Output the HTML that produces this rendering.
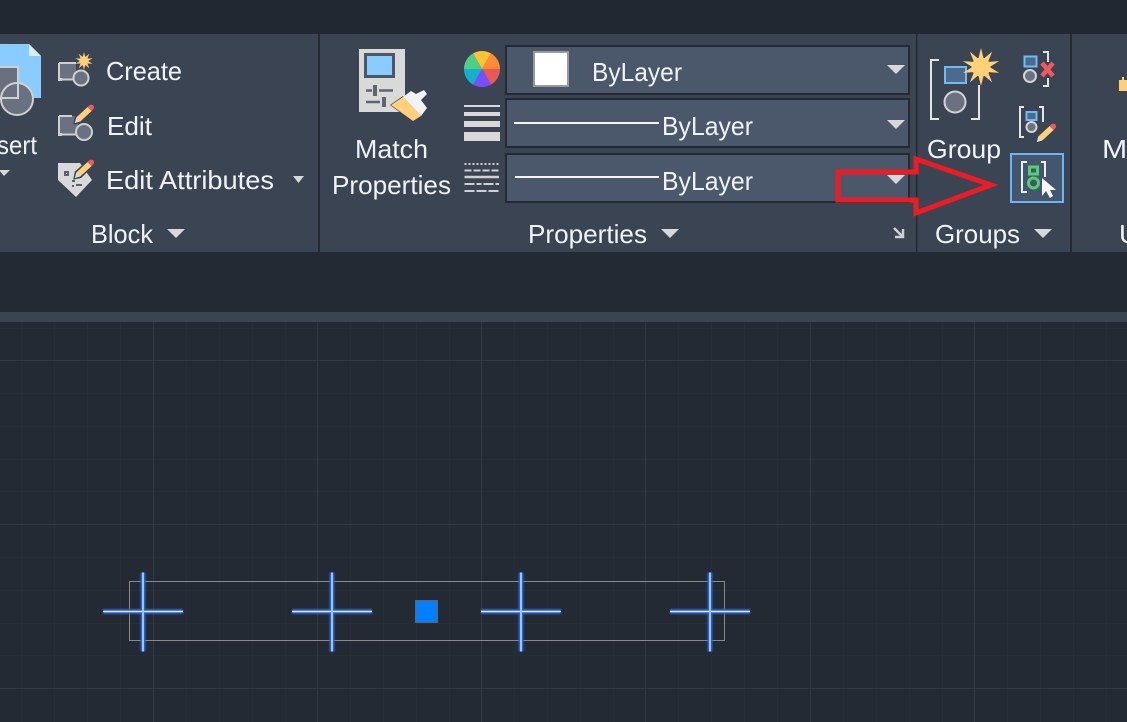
<!DOCTYPE html>
<html><head><meta charset="utf-8"><style>
html,body{margin:0;padding:0;background:#242a33;width:1127px;height:722px;overflow:hidden}
svg{display:block}
text{font-family:"Liberation Sans",sans-serif;font-size:26px;fill:#f0f3f6}
</style></head><body>
<svg width="1127" height="722" viewBox="0 0 1127 722" xmlns="http://www.w3.org/2000/svg">
<defs>
<filter id="g" x="-20%" y="-20%" width="140%" height="140%"><feGaussianBlur stdDeviation="0.8"/></filter>
<g id="cross">
<path d="M-40 0H40M0 -39V40" stroke="#2c64cc" stroke-width="5" fill="none" filter="url(#g)"/>
<path d="M-40 0H40" stroke="#dcebff" stroke-width="1.500" fill="none"/>
<path d="M0 -39V40" stroke="#9cc4ff" stroke-width="2" fill="none"/>
</g>
<g id="pencil" transform="scale(0.8)">
<path d="M-11 12L-9 2L7 -12L14 -5L-1 10Z" fill="#3b4452"/>
<path d="M-9 10L-7 3L7 -10L12 -5L-2 8Z" fill="#ffd27a"/>
<path d="M7 -10L9 -12A3.500 3.500 0 0 1 14 -7L12 -5Z" fill="#f0595f"/>
<path d="M-9 10L-7 3L-2 8Z" fill="#d8d8d8"/>
</g>
<g id="star" fill="#ffd27a">
<path d="M0 -10L2.500 0L0 10L-2.500 0Z"/>
<path d="M0 -10L2.500 0L0 10L-2.500 0Z" transform="rotate(36)"/>
<path d="M0 -10L2.500 0L0 10L-2.500 0Z" transform="rotate(72)"/>
<path d="M0 -10L2.500 0L0 10L-2.500 0Z" transform="rotate(108)"/>
<path d="M0 -10L2.500 0L0 10L-2.500 0Z" transform="rotate(144)"/>
<circle r="5"/>
</g>
</defs>

<rect width="1127" height="722" fill="#242a33"/>
<rect y="0" width="1127" height="34" fill="#222832"/>
<rect y="34" width="1127" height="218" fill="#3b4452"/>
<rect y="252" width="1127" height="60" fill="#232a34"/>
<rect y="312" width="1127" height="10" fill="#3b4452"/>
<rect x="318" y="34" width="2" height="218" fill="#232a34"/>
<rect x="916" y="34" width="1.500" height="218" fill="#232a34"/>
<rect x="1070" y="34" width="2" height="218" fill="#232a34"/>

<!-- grid -->
<g stroke="#282e38" stroke-width="1" fill="none">
<path d="M22 322V722M54.500 322V722M87.500 322V722M120.500 322V722M186.500 322V722M219.500 322V722M252.500 322V722M285.500 322V722M350.500 322V722M383.500 322V722M416.500 322V722M449.500 322V722M514.500 322V722M547.500 322V722M580.500 322V722M613.500 322V722M678.500 322V722M711.500 322V722M744.500 322V722M777.500 322V722M843.500 322V722M876.500 322V722M909.500 322V722M942.500 322V722M1007.500 322V722M1040.500 322V722M1073.500 322V722M1106.500 322V722"/>
<path d="M0 328.500H1127M0 393.500H1127M0 426.500H1127M0 459.500H1127M0 491.500H1127M0 557.500H1127M0 590.500H1127M0 623.500H1127M0 655.500H1127"/>
</g>
<g stroke="#323945" stroke-width="1" fill="none">
<path d="M153.500 322V722M317.500 322V722M481.500 322V722M645.500 322V722M810.500 322V722M974.500 322V722"/>
<path d="M0 360.500H1127M0 524.500H1127M0 688.500H1127"/>
</g>

<!-- drawing -->
<rect x="129.500" y="581.500" width="595" height="59" fill="none" stroke="#8a8a8a" stroke-width="1"/>
<use href="#cross" x="143" y="611.500"/>
<use href="#cross" x="332" y="611.500"/>
<use href="#cross" x="521" y="611.500"/>
<use href="#cross" x="710" y="611.500"/>
<rect x="415.500" y="600.500" width="22" height="22" fill="#0080ff" stroke="#666" stroke-width="1"/>

<!-- Insert icon -->
<path d="M0 44H29L41 56V98H0Z" fill="#8accff"/>
<path d="M29 44L41 56H29Z" fill="#d6ecff"/>
<rect x="-2" y="67" width="20" height="31" fill="#697180" stroke="#d0d0d0" stroke-width="2"/>
<circle cx="17" cy="99" r="16" fill="#697180" stroke="#d0d0d0" stroke-width="2"/>
<path d="M0 98H18V83" stroke="#d0d0d0" stroke-width="2" fill="none"/>
<text x="-3" y="154" textLength="40" lengthAdjust="spacingAndGlyphs">sert</text>
<path d="M-1 170H10L4 176Z" fill="#d8d8d8"/>

<!-- Create icon -->
<rect x="59" y="63" width="17" height="17" fill="#6a7180"/>
<path d="M59 63H76M59 63V79.500H74" stroke="#d0d0d0" stroke-width="2" fill="none"/>
<rect x="58" y="78" width="4" height="3" fill="#d0d0d0"/>
<circle cx="81" cy="78" r="7.500" fill="#6a7180" stroke="#d0d0d0" stroke-width="2"/>
<use href="#star" transform="translate(84 61) scale(0.9)"/>
<text x="106" y="80" textLength="76" lengthAdjust="spacingAndGlyphs">Create</text>

<!-- Edit icon -->
<rect x="59" y="116" width="19" height="19" fill="#6a7180"/>
<path d="M59 116H72M59 116V134.500H76" stroke="#d0d0d0" stroke-width="2" fill="none"/>
<rect x="58" y="133" width="4" height="3" fill="#d0d0d0"/>
<circle cx="84" cy="132" r="8" fill="#6a7180" stroke="#d0d0d0" stroke-width="2"/>
<use href="#pencil" transform="translate(82 115)"/>
<text x="107" y="135" textLength="45" lengthAdjust="spacingAndGlyphs">Edit</text>

<!-- Edit Attributes icon -->
<path d="M58 163H80L92 180L76 197L58 180Z" fill="#d9d9d9"/>
<path d="M65 172h3v3h-3zM72 181h3M76 185h6M72 186h2" stroke="#5a6270" stroke-width="2" fill="none"/>
<use href="#pencil" transform="translate(82 170)"/>
<text x="106" y="189" textLength="168" lengthAdjust="spacingAndGlyphs">Edit Attributes</text>
<path d="M293 176H304L298.500 183Z" fill="#d8d8d8"/>

<text x="91" y="243" textLength="62" lengthAdjust="spacingAndGlyphs">Block</text>
<path d="M167 229H185L176 238Z" fill="#d8d8d8"/>

<!-- Match Properties icon -->
<rect x="359" y="49" width="46" height="63" fill="#d9d9d9"/>
<rect x="365.500" y="54.500" width="28" height="22" fill="#8accff" stroke="#4c5664" stroke-width="3"/>
<path d="M366 90.500H372M379 90.500H393M366 102H380" stroke="#5f6570" stroke-width="2.500" fill="none"/>
<path d="M375 85V96M384 97V107" stroke="#5f6570" stroke-width="4" fill="none"/>
<path d="M390 105L403 96L423 116L413 122Z" fill="#3b4452"/>
<path d="M391 105L403 97L421 116L413 121Z" fill="#ffd27a"/>
<path d="M403 97L411 91L416 94L424 90L427 94L421 100L427 108L421 116Z" fill="#f2f2f2"/>
<text x="355" y="158" textLength="73" lengthAdjust="spacingAndGlyphs">Match</text>
<text x="332" y="194" textLength="119" lengthAdjust="spacingAndGlyphs">Properties</text>

<!-- color wheel -->
<g transform="translate(482 69)">
<path d="M0 0L-9 -15.600A18 18 0 0 1 9 -15.600Z" fill="#ffc233"/>
<path d="M0 0L9 -15.600A18 18 0 0 1 18 0Z" fill="#ff8c33"/>
<path d="M0 0L18 0A18 18 0 0 1 9 15.600Z" fill="#e85858"/>
<path d="M0 0L9 15.600A18 18 0 0 1 -9 15.600Z" fill="#7c4dff"/>
<path d="M0 0L-9 15.600A18 18 0 0 1 -18 0Z" fill="#14b0cf"/>
<path d="M0 0L-18 0A18 18 0 0 1 -9 -15.600Z" fill="#4fcf85"/>
</g>
<!-- lineweight -->
<g fill="#d9d9d9">
<rect x="464" y="105" width="36" height="2"/>
<rect x="464" y="112" width="36" height="4"/>
<rect x="464" y="121" width="36" height="6"/>
<rect x="464" y="132" width="36" height="9"/>
</g>
<!-- linetype -->
<g stroke="#d0d0d0" fill="none">
<path d="M464.500 164H500" stroke-width="2" stroke-dasharray="2 2"/>
<path d="M464.500 170.500H499" stroke-width="2" stroke-dasharray="7 2"/>
<path d="M464.500 177H499" stroke-width="2.500"/>
<path d="M464.500 184H499" stroke-width="2" stroke-dasharray="10 2 5 2"/>
<path d="M464.500 191H499" stroke-width="2" stroke-dasharray="10 2"/>
</g>

<!-- dropdowns -->
<g fill="#4b576a" stroke="#232a34" stroke-width="2">
<rect x="506" y="46" width="403" height="48"/>
<rect x="506" y="99" width="403" height="48"/>
<rect x="506" y="154" width="403" height="48"/>
</g>
<rect x="534" y="52" width="34" height="34" fill="#fff" stroke="#9a9a9a" stroke-width="2"/>
<text x="592" y="81" textLength="90" lengthAdjust="spacingAndGlyphs">ByLayer</text>
<rect x="514" y="122" width="145" height="2" fill="#f4f4f4"/>
<text x="662" y="135" textLength="91" lengthAdjust="spacingAndGlyphs">ByLayer</text>
<rect x="515" y="176" width="144" height="2" fill="#f4f4f4"/>
<text x="662" y="190" textLength="91" lengthAdjust="spacingAndGlyphs">ByLayer</text>
<path d="M887 65H905L896 74Z M887 120H905L896 129Z M887 175H905L896 184Z" fill="#d8d8d8"/>

<text x="528" y="243" textLength="119" lengthAdjust="spacingAndGlyphs">Properties</text>
<path d="M661 229H679L670 238Z" fill="#d8d8d8"/>
<path d="M894 228L902 236M903 229V237H895" stroke="#d0d0d0" stroke-width="2.500" fill="none"/>

<!-- Group icon -->
<path d="M939 60H931V119H939M971 119H979V85" stroke="#e4e4e4" stroke-width="2" fill="none"/>
<rect x="945" y="67" width="21" height="16" fill="#4a6a8e" stroke="#6fbcf5" stroke-width="2"/>
<circle cx="955" cy="102" r="10.500" fill="#6a7180" stroke="#d4d4d4" stroke-width="2"/>
<use href="#star" transform="translate(981 67) scale(1.900)"/>
<text x="927" y="158" textLength="74" lengthAdjust="spacingAndGlyphs">Group</text>

<!-- small: ungroup -->
<path d="M1043 52H1048V62M1048 78V86H1043" stroke="#e4e4e4" stroke-width="2" fill="none"/>
<rect x="1024.500" y="56.500" width="12" height="10" fill="#4a6a8e" stroke="#6fbcf5" stroke-width="2"/>
<circle cx="1030" cy="76" r="6" fill="#6a7180" stroke="#d4d4d4" stroke-width="2"/>
<path d="M1042 63L1053 76M1053 63L1042 76" stroke="#f0595f" stroke-width="4.500" fill="none"/>

<!-- small: edit group -->
<path d="M1024 107H1020V137H1024M1039 107H1043V122" stroke="#e4e4e4" stroke-width="2" fill="none"/>
<rect x="1026.500" y="112" width="10" height="8" fill="#4a6a8e" stroke="#6fbcf5" stroke-width="2"/>
<circle cx="1031.500" cy="127" r="5" fill="#6a7180" stroke="#d4d4d4" stroke-width="2"/>
<use href="#pencil" transform="translate(1044 134)"/>

<!-- selected group selection -->
<rect x="1011" y="154" width="52" height="48" fill="#43566e" stroke="#6ab7ef" stroke-width="2"/>
<path d="M1027 162H1022V192H1027M1041 162H1045V177" stroke="#f0f0f0" stroke-width="2" fill="none"/>
<rect x="1029.500" y="167" width="8" height="7" fill="#43566e" stroke="#55d070" stroke-width="3"/>
<circle cx="1033.500" cy="183" r="5" fill="#43566e" stroke="#55d070" stroke-width="3"/>
<path d="M1042 178V196L1046 191L1050 198L1053 196L1050 190L1056 190Z" fill="#f6f6f6"/>

<text x="935" y="243" textLength="85" lengthAdjust="spacingAndGlyphs">Groups</text>
<path d="M1034 229H1052L1043 238Z" fill="#d8d8d8"/>

<!-- right section -->
<path d="M1119 91V80H1122V77H1124V80H1127V91Z" fill="#ffd27a"/>
<text x="1102" y="158" textLength="42" lengthAdjust="spacingAndGlyphs">Me</text>
<text x="1119" y="243" textLength="20" lengthAdjust="spacingAndGlyphs">U</text>

<!-- red arrow -->
<path d="M838 172H916V159L991 185L916 213V200H838Z" fill="none" stroke="#ed1c24" stroke-width="5" stroke-linejoin="miter"/>
</svg>
</body></html>
